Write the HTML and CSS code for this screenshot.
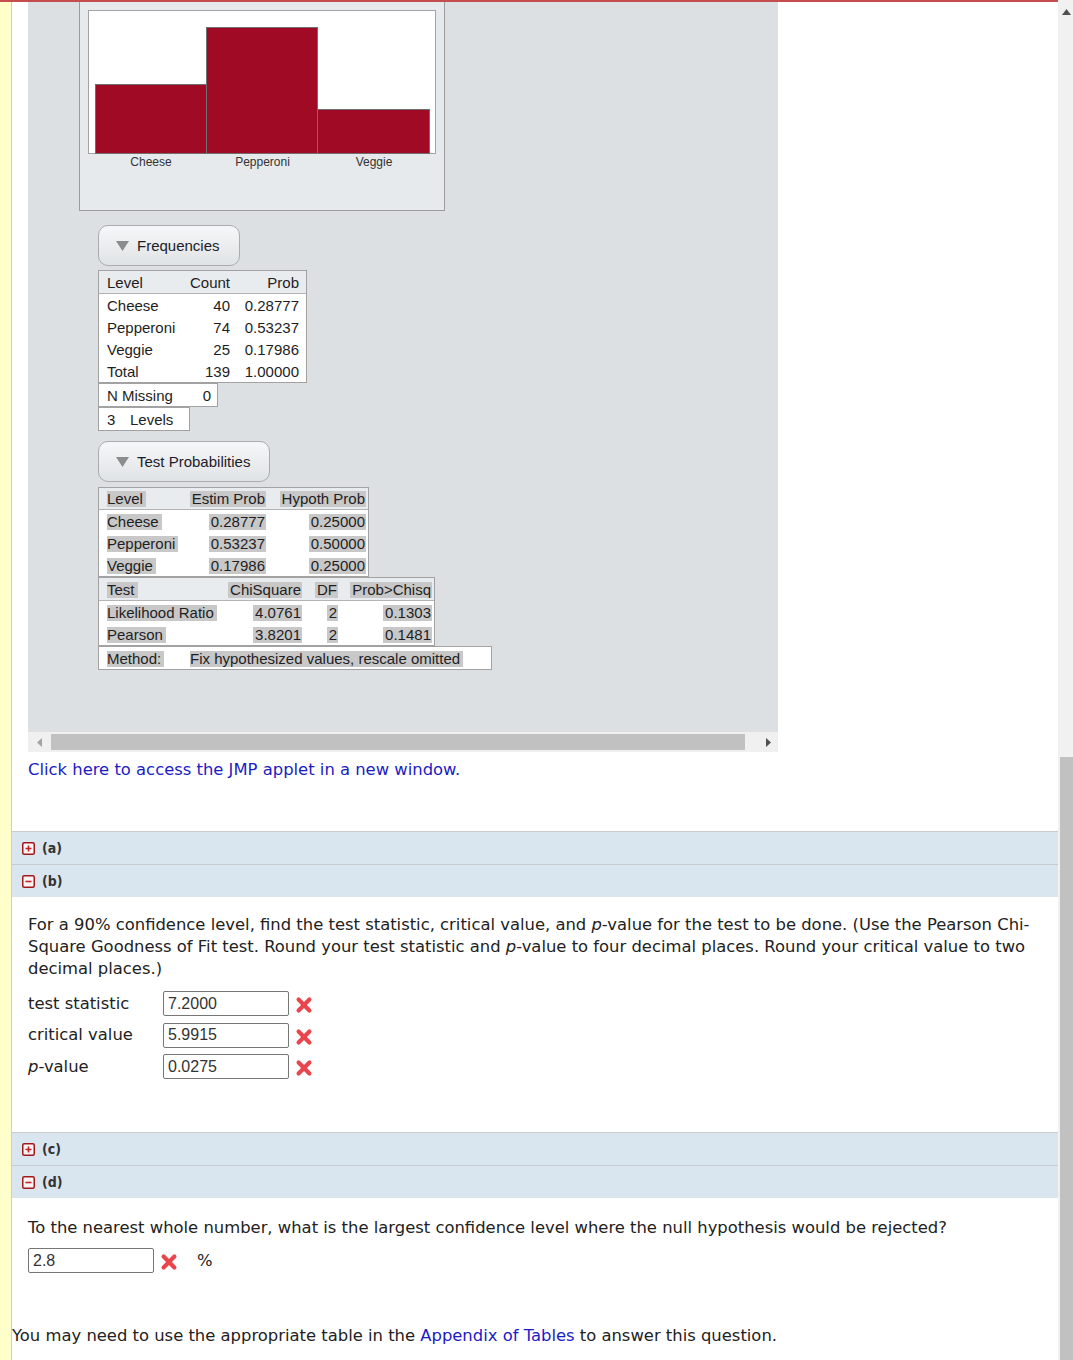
FILE: index.html
```html
<!DOCTYPE html>
<html>
<head>
<meta charset="utf-8">
<title>JMP Chi-Square Question</title>
<link rel="stylesheet" href="styles.css">
</head>
<body>
<div class="screen">
  <div class="doc">
    <div class="strip"></div>
    <div class="main">
      <div class="applet">
        <div class="chart-panel">
          <svg class="plot" width="348" height="144" viewBox="0 0 348 144">
            <rect x="0.5" y="0.5" width="347" height="143" fill="#ffffff" stroke="#a3a3a3"/>
            <rect x="7.5" y="74.5" width="111" height="69" fill="#a00a24" stroke="#6f6f6f"/>
            <rect x="118.5" y="17.5" width="111" height="126" fill="#a00a24" stroke="#6f6f6f"/>
            <rect x="229.5" y="99.5" width="112" height="44" fill="#a00a24" stroke="#6f6f6f"/>
          </svg>
          <div class="axis-labels"><span>Cheese</span><span>Pepperoni</span><span>Veggie</span></div>
        </div>

        <div class="report">
          <div class="obtn btn-freq">
            <svg class="tri" width="13" height="10" viewBox="0 0 13 10"><polygon points="0,0 13,0 6.5,10" fill="#8a8c8e"/></svg>
            <span>Frequencies</span>
          </div>

          <div class="tbl t-freq">
            <div class="row hdr"><span>Level</span><span class="r">Count</span><span class="r">Prob</span></div>
            <div class="row"><span>Cheese</span><span class="r">40</span><span class="r">0.28777</span></div>
            <div class="row"><span>Pepperoni</span><span class="r">74</span><span class="r">0.53237</span></div>
            <div class="row"><span>Veggie</span><span class="r">25</span><span class="r">0.17986</span></div>
            <div class="row"><span>Total</span><span class="r">139</span><span class="r">1.00000</span></div>
          </div>
          <div class="tbl t-miss">
            <div class="row"><span>N Missing</span><span class="r">0</span></div>
          </div>
          <div class="tbl t-lev">
            <div class="row"><span>3</span><span>Levels</span></div>
          </div>

          <div class="obtn btn-test">
            <svg class="tri" width="13" height="10" viewBox="0 0 13 10"><polygon points="0,0 13,0 6.5,10" fill="#8a8c8e"/></svg>
            <span>Test Probabilities</span>
          </div>

          <div class="tbl t-prob">
            <div class="row hdr"><div><span class="hl">Level</span></div><div class="r"><span class="hl">Estim Prob</span></div><div class="r"><span class="hl">Hypoth Prob</span></div></div>
            <div class="row"><div><span class="hl">Cheese</span></div><div class="r"><span class="hl">0.28777</span></div><div class="r"><span class="hl">0.25000</span></div></div>
            <div class="row"><div><span class="hl">Pepperoni</span></div><div class="r"><span class="hl">0.53237</span></div><div class="r"><span class="hl">0.50000</span></div></div>
            <div class="row"><div><span class="hl">Veggie</span></div><div class="r"><span class="hl">0.17986</span></div><div class="r"><span class="hl">0.25000</span></div></div>
          </div>
          <div class="tbl t-test">
            <div class="row hdr"><div><span class="hl">Test</span></div><div class="r"><span class="hl">ChiSquare</span></div><div class="r"><span class="hl">DF</span></div><div class="r"><span class="hl">Prob&gt;Chisq</span></div></div>
            <div class="row"><div><span class="hl">Likelihood Ratio</span></div><div class="r"><span class="hl">4.0761</span></div><div class="r"><span class="hl">2</span></div><div class="r"><span class="hl">0.1303</span></div></div>
            <div class="row"><div><span class="hl">Pearson</span></div><div class="r"><span class="hl">3.8201</span></div><div class="r"><span class="hl">2</span></div><div class="r"><span class="hl">0.1481</span></div></div>
          </div>
          <div class="tbl t-method">
            <div class="row"><div><span class="hl">Method:</span></div><div><span class="hl">Fix hypothesized values, rescale omitted</span></div></div>
          </div>
        </div>
      </div>

      <div class="hscroll">
        <svg class="harrow" width="6" height="9" viewBox="0 0 6 9"><polygon points="5,0 5,9 0,4.5" fill="#a3a3a3"/></svg>
        <div class="hthumb"></div>
        <svg class="harrow right" width="6" height="9" viewBox="0 0 6 9"><polygon points="1,0 1,9 6,4.5" fill="#505050"/></svg>
      </div>

      <p class="applet-link"><a href="#">Click here to access the JMP applet in a new window.</a></p>

      <div class="parts parts-ab">
        <div class="part-head">
          <svg class="toggle" width="13" height="13" viewBox="0 0 13 13"><rect x="0.75" y="0.75" width="11.5" height="11.5" rx="1.5" fill="#fdf4f4" stroke="#a01818" stroke-width="1.5"/><path d="M3.5 6.5 H9.5 M6.5 3.5 V9.5" stroke="#c0202a" stroke-width="1.6"/></svg>
          <span>(a)</span>
        </div>
        <div class="part-head">
          <svg class="toggle" width="13" height="13" viewBox="0 0 13 13"><rect x="0.75" y="0.75" width="11.5" height="11.5" rx="1.5" fill="#fdf4f4" stroke="#a01818" stroke-width="1.5"/><path d="M3.5 6.5 H9.5" stroke="#c0202a" stroke-width="1.6"/></svg>
          <span>(b)</span>
        </div>
      </div>

      <div class="qbody qb-b">
        <p class="qtext">For a 90% confidence level, find the test statistic, critical value, and <i>p</i>-value for the test to be done. (Use the Pearson Chi-Square Goodness of Fit test. Round your test statistic and <i>p</i>-value to four decimal places. Round your critical value to two decimal places.)</p>
        <div class="answers">
          <span class="alabel">test statistic</span>
          <input class="ans" type="text" value="7.2000">
          <svg class="xmark" width="18" height="18" viewBox="0 0 18 18"><path d="M3.6 3.6 L14.4 14.4 M14.4 3.6 L3.6 14.4" stroke="#e9454d" stroke-width="4.2" stroke-linecap="round"/></svg>

          <span class="alabel">critical value</span>
          <input class="ans" type="text" value="5.9915">
          <svg class="xmark" width="18" height="18" viewBox="0 0 18 18"><path d="M3.6 3.6 L14.4 14.4 M14.4 3.6 L3.6 14.4" stroke="#e9454d" stroke-width="4.2" stroke-linecap="round"/></svg>

          <span class="alabel"><i>p</i>-value</span>
          <input class="ans" type="text" value="0.0275">
          <svg class="xmark" width="18" height="18" viewBox="0 0 18 18"><path d="M3.6 3.6 L14.4 14.4 M14.4 3.6 L3.6 14.4" stroke="#e9454d" stroke-width="4.2" stroke-linecap="round"/></svg>
        </div>
      </div>

      <div class="parts parts-cd">
        <div class="part-head">
          <svg class="toggle" width="13" height="13" viewBox="0 0 13 13"><rect x="0.75" y="0.75" width="11.5" height="11.5" rx="1.5" fill="#fdf4f4" stroke="#a01818" stroke-width="1.5"/><path d="M3.5 6.5 H9.5 M6.5 3.5 V9.5" stroke="#c0202a" stroke-width="1.6"/></svg>
          <span>(c)</span>
        </div>
        <div class="part-head">
          <svg class="toggle" width="13" height="13" viewBox="0 0 13 13"><rect x="0.75" y="0.75" width="11.5" height="11.5" rx="1.5" fill="#fdf4f4" stroke="#a01818" stroke-width="1.5"/><path d="M3.5 6.5 H9.5" stroke="#c0202a" stroke-width="1.6"/></svg>
          <span>(d)</span>
        </div>
      </div>

      <div class="qbody qb-d">
        <p class="qtext">To the nearest whole number, what is the largest confidence level where the null hypothesis would be rejected?</p>
        <div class="answer-inline">
          <input class="ans" type="text" value="2.8">
          <svg class="xmark" width="18" height="18" viewBox="0 0 18 18"><path d="M3.6 3.6 L14.4 14.4 M14.4 3.6 L3.6 14.4" stroke="#e9454d" stroke-width="4.2" stroke-linecap="round"/></svg>
          <span class="pct">%</span>
        </div>
      </div>

      <p class="footnote">You may need to use the appropriate table in the <a href="#">Appendix of Tables</a> to answer this question.</p>
    </div>
  </div>
  <div class="vscroll">
    <svg class="varrow" width="9" height="6" viewBox="0 0 9 6"><polygon points="0,6 9,6 4.5,0" fill="#505050"/></svg>
    <div class="vthumb"></div>
  </div>
</div>
</body>
</html>
```

FILE: styles.css
```css
* { box-sizing: border-box; }
html, body { margin: 0; padding: 0; }
body {
  width: 1073px;
  height: 1360px;
  overflow: hidden;
  background: #ffffff;
  color: #222222;
  font-family: "DejaVu Sans", Verdana, sans-serif;
  font-size: 16.4px;
}

.screen { display: flex; height: 1360px; }
.doc {
  flex: 1;
  min-width: 0;
  display: flex;
  border-top: 2px solid #c44e4e;
}
.strip {
  width: 12px;
  flex: none;
  background: #ffffcc;
  border-right: 1px solid #d9d29c;
}
.main { flex: 1; min-width: 0; }

/* ---------- vertical scrollbar ---------- */
.vscroll {
  width: 15px;
  flex: none;
  background: #f1f1f1;
  display: flex;
  flex-direction: column;
  align-items: flex-end;
}
.varrow { margin: 9px 2px 0 0; }
.vthumb {
  margin-top: auto;
  width: 13px;
  height: 603px;
  background: #c1c1c1;
}

/* ---------- JMP applet ---------- */
.applet {
  margin-left: 16px;
  width: 750px;
  height: 730px;
  background: #dce0e3;
  font-family: "Liberation Sans", Arial, sans-serif;
  font-size: 15px;
  color: #1e1e24;
}
.chart-panel {
  margin-left: 51px;
  width: 366px;
  height: 209px;
  background: #e7eaec;
  border: 1px solid #9c9c9c;
  border-top: none;
  padding: 8px 0 0 8px;
}
.plot { display: block; }
.axis-labels {
  display: grid;
  grid-template-columns: 112px 111px 112px;
  padding-left: 7px;
  margin-top: 1px;
  font-size: 12px;
  line-height: 14px;
  color: #333333;
  text-align: center;
}

.report { margin-left: 70px; padding-top: 14px; }

.obtn {
  display: flex;
  align-items: center;
  height: 41px;
  padding-left: 17px;
  border: 1px solid #a9adb0;
  border-radius: 10px;
  background: linear-gradient(#f6f7f8, #e0e3e5);
  color: #1c1c2a;
}
.obtn .tri { margin-right: 8px; }
.btn-freq { width: 142px; }
.btn-test { width: 172px; margin-top: 10px; }

.tbl {
  width: fit-content;
  background: #ffffff;
  border: 1px solid #a2a2a2;
}
.row {
  display: grid;
  height: 22px;
  align-items: center;
  padding-left: 8px;
  white-space: nowrap;
}
.r { text-align: right; }
.hdr {
  background: #e9ecee;
  border-bottom: 1px solid #b4b4b4;
  height: 23px;
}
.hl {
  display: inline-block;
  background: #c8c8c8;
  line-height: 16px;
  padding: 0 3px 0 0;
}
.r .hl { padding: 0 1px 0 2px; }

.t-freq { margin-top: 4px; }
.t-freq .row { grid-template-columns: 70px 53px 69px; padding-right: 7px; }
.t-miss .row { grid-template-columns: 80px 24px; padding-right: 6px; height: 22px; }
.t-lev .row { grid-template-columns: 23px 51px; padding-right: 8px; }

.t-prob { margin-top: 5px; }
.t-prob .row { grid-template-columns: 78px 81px 100px; padding-right: 2px; }
.t-prob .hdr { height: 22px; }
.t-test .row { grid-template-columns: 113px 82px 36px 94px; padding-right: 2px; }
.t-method .row { grid-template-columns: 83px 301px; }

/* ---------- horizontal scrollbar ---------- */
.hscroll {
  margin-left: 16px;
  width: 750px;
  height: 20px;
  background: #f0f0f0;
  display: flex;
  align-items: center;
}
.harrow { margin: 0 8px 0 9px; flex: none; }
.harrow.right { margin: 0 7px 0 20px; }
.hthumb { width: 696px; height: 16px; background: #c1c1c1; }

.applet-link {
  margin: 7px 0 0 16px;
  line-height: 22px;
}
a { color: #1c1cc4; text-decoration: none; }

/* ---------- parts ---------- */
.parts-ab { margin-top: 50px; }
.part-head {
  display: flex;
  align-items: center;
  height: 33px;
  padding-left: 10px;
  background: #d9e5ef;
  border-top: 1px solid #c8ccd0;
  font-family: "DejaVu Sans Condensed", "DejaVu Sans", sans-serif;
  font-stretch: condensed;
  font-weight: bold;
  font-size: 14px;
  color: #333333;
}
.toggle { margin-right: 7px; flex: none; }

.qbody { padding: 17px 18px 0 16px; }
.qb-d { padding-top: 19px; }
.qtext { margin: 0; line-height: 22px; }

.answers {
  display: grid;
  grid-template-columns: 135px 126px auto;
  row-gap: 6.5px;
  align-items: center;
  margin-top: 11px;
}
.alabel { line-height: 22px; }
.ans {
  width: 126px;
  height: 25px;
  margin: 0;
  padding: 0 4px;
  border: 1px solid #767676;
  border-radius: 2px;
  background: #ffffff;
  font-family: "Liberation Sans", Arial, sans-serif;
  font-size: 16px;
  color: #333333;
}
.xmark { margin: 3px 0 0 6px; }

.parts-cd { margin-top: 53px; }

.answer-inline {
  display: flex;
  align-items: center;
  margin-top: 9px;
}
.pct { margin-left: 19px; }

.footnote {
  margin: 52px 0 0 0;
  line-height: 22px;
}
```
